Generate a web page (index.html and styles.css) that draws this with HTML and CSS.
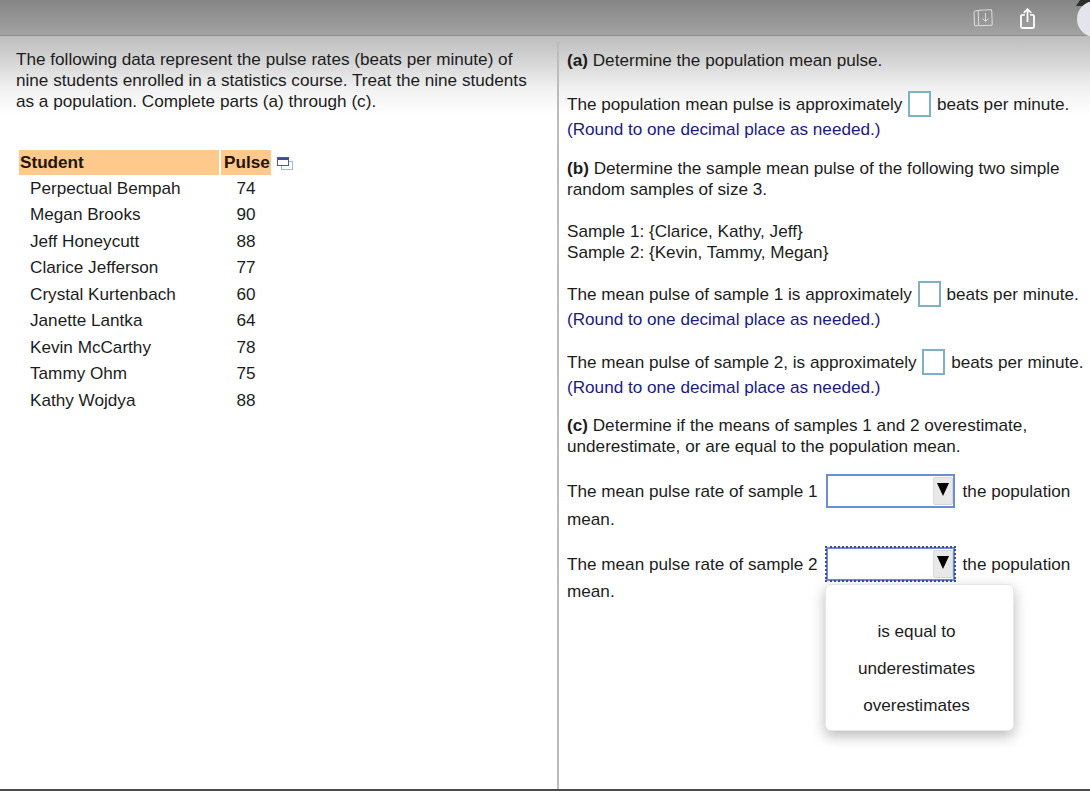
FILE: index.html
```html
<!DOCTYPE html>
<html lang="en">
<head>
<meta charset="utf-8">
<title>Pulse rates</title>
<link rel="stylesheet" href="styles.css">
</head>
<body>
<div class="page">
  <header class="topbar">
    <svg class="icon-save" width="20" height="18" viewBox="0 0 20 18" fill="none" stroke="#dedede" stroke-width="1">
      <path d="M5 1.5 L2 2 Q1 2.2 1 3 L1.5 16 Q1.6 17 2.5 17 L5.5 16.5"/>
      <rect x="5.5" y="1" width="13.5" height="15.5" rx="1" transform="rotate(-2 12 9)"/>
      <path d="M12.5 4 V12 M9.5 9.5 L12.5 12.5 L15.5 9.5"/>
    </svg>
    <svg class="icon-share" width="15" height="21" viewBox="0 0 15 21" fill="none" stroke="#fff" stroke-width="1.8">
      <path d="M7.5 14 V1.2 M3.8 4.8 L7.5 1.2 L11.2 4.8"/>
      <path d="M4.8 6.8 H2.2 Q1 6.8 1 8 V18.8 Q1 20 2.2 20 H12.8 Q14 20 14 18.8 V8 Q14 6.8 12.8 6.8 H10.2"/>
    </svg>
  </header>
  <div class="corner-speck"></div>
  <div class="corner-circle"></div>
  <main class="content">
    <section class="left">
      <p class="intro">The following data represent the pulse rates (beats per minute) of nine students enrolled in a statistics course. Treat the nine students as a population. Complete parts (a) through (c).</p>
      <div class="table-wrap">
        <table class="data">
          <thead>
            <tr><th class="name-h">Student</th><th class="pulse-h">Pulse</th></tr>
          </thead>
          <tbody>
            <tr><td class="name">Perpectual Bempah</td><td class="pulse">74</td></tr>
            <tr><td class="name">Megan Brooks</td><td class="pulse">90</td></tr>
            <tr><td class="name">Jeff Honeycutt</td><td class="pulse">88</td></tr>
            <tr><td class="name">Clarice Jefferson</td><td class="pulse">77</td></tr>
            <tr><td class="name">Crystal Kurtenbach</td><td class="pulse">60</td></tr>
            <tr><td class="name">Janette Lantka</td><td class="pulse">64</td></tr>
            <tr><td class="name">Kevin McCarthy</td><td class="pulse">78</td></tr>
            <tr><td class="name">Tammy Ohm</td><td class="pulse">75</td></tr>
            <tr><td class="name">Kathy Wojdya</td><td class="pulse">88</td></tr>
          </tbody>
        </table>
        <svg class="icon-popout" width="16" height="13" viewBox="0 0 16 13" fill="none">
          <rect x="4.5" y="4.5" width="11" height="8" fill="#fff" stroke="#a9b4d6"/>
          <rect x="0.5" y="0.5" width="11" height="8" fill="#fff" stroke="#4a5aa0"/>
          <rect x="1" y="1" width="10" height="2" fill="#3c4c96"/>
        </svg>
      </div>
    </section>
    <section class="right">
      <p class="a-head"><b>(a)</b> Determine the population mean pulse.</p>
      <p class="line a-line">The population mean pulse is approximately <span class="box"></span> beats per minute.</p>
      <p class="hint">(Round to one decimal place as needed.)</p>
      <p class="b-head"><b>(b)</b> Determine the sample mean pulse of the following two simple random samples of size 3.</p>
      <p class="samples">Sample 1: {Clarice, Kathy, Jeff}<br>Sample 2: {Kevin, Tammy, Megan}</p>
      <p class="line s1-line">The mean pulse of sample 1 is approximately <span class="box"></span> beats per minute.</p>
      <p class="hint">(Round to one decimal place as needed.)</p>
      <p class="line s2-line">The mean pulse of sample 2, is approximately <span class="box"></span> beats per minute.</p>
      <p class="hint">(Round to one decimal place as needed.)</p>
      <p class="c-head"><b>(c)</b> Determine if the means of samples 1 and 2 overestimate, underestimate, or are equal to the population mean.</p>
      <div class="drop-row first">
        <span>The mean pulse rate of sample 1</span>
        <span class="drop"><span class="arrow"><i class="tri"></i></span></span>
        <span>the population</span>
      </div>
      <p class="tail">mean.</p>
      <div class="drop-row second">
        <span>The mean pulse rate of sample 2</span>
        <span class="drop focused"><span class="arrow"><i class="tri"></i></span></span>
        <span>the population</span>
      </div>
      <p class="tail last">mean.</p>
      <ul class="menu">
        <li>is equal to</li>
        <li>underestimates</li>
        <li>overestimates</li>
      </ul>
    </section>
  </main>
  <div class="bottom-line"></div>
</div>
</body>
</html>
```
FILE: styles.css
```css
* { box-sizing: border-box; }
html, body { margin: 0; padding: 0; }
body {
  width: 1090px;
  height: 791px;
  overflow: hidden;
  background: #fff;
  font-family: "Liberation Sans", Arial, sans-serif;
  font-size: 17.15px;
  line-height: 21px;
  color: #1c1c1c;
}
p { margin: 0; }
.page {
  position: relative;
  height: 791px;
  display: flex;
  flex-direction: column;
  overflow: hidden;
  background: linear-gradient(to bottom, #bdbdbd 36px, #d4d4d4 60px, #f2f2f2 90px, #fff 115px);
}
.topbar {
  height: 36px;
  flex: none;
  display: flex;
  align-items: center;
  justify-content: flex-end;
  gap: 27px;
  padding-right: 55px;
  background: linear-gradient(to bottom, #858585, #a3a3a3);
  border-bottom: 1px solid #8e8e8e;
}
.icon-save { margin-top: 1px; }
.icon-share { margin-top: 2px; }
.corner-speck {
  position: absolute;
  left: 1078px;
  top: 0;
  width: 14px;
  height: 6px;
  background: #2e2e2e;
  transform: skewX(-35deg);
}
.corner-circle {
  position: absolute;
  left: 1077px;
  top: 1px;
  width: 36px;
  height: 36px;
  border-radius: 50%;
  background: #e3e4ec;
}
.content { flex: 1; display: flex; min-height: 0; }
.left { width: 557px; flex: none; padding: 13px 16px 0; }
.intro { width: 520px; }
.table-wrap { display: flex; align-items: flex-start; margin: 38px 0 0 3px; }
.data { border-collapse: separate; border-spacing: 0; }
.data th { background: #fdc98c; height: 25px; padding: 0; font-weight: bold; text-align: left; color: #24140a; }
.name-h { width: 200px; padding-left: 1px !important; }
.data th + th { border-left: 2px solid #fff; width: 52px; padding-left: 3px; }
.data td { height: 26.5px; padding: 0; }
.name { padding-left: 11px !important; }
.pulse { text-align: center; padding-left: 2px !important; }
.icon-popout { margin: 7px 0 0 6px; }
.right {
  position: relative;
  flex: 1;
  margin-top: 5px;
  border-left: 2px solid #bcbcbc;
  padding: 9px 0 0 8px;
}
.line { white-space: nowrap; }
.box {
  display: inline-block;
  width: 23px;
  height: 26px;
  border: 2px solid #7fb1c4;
  background: #fff;
  vertical-align: -7px;
  margin: 0 1px;
}
.a-head { margin-bottom: 20px; }
.a-line { margin-bottom: 4px; height: 24px; }
.hint { color: #1a1a80; }
.b-head { margin-top: 18px; width: 510px; }
.samples { margin-top: 21px; }
.s1-line { margin-top: 18px; height: 24px; margin-bottom: 4px; }
.s2-line { margin-top: 19px; height: 24px; margin-bottom: 4px; }
.c-head { margin-top: 17px; width: 510px; }
.drop-row { display: flex; align-items: center; gap: 8px; height: 34px; white-space: nowrap; }
.drop-row.first { margin-top: 17px; }
.drop-row.second { margin-top: 17px; }
.drop {
  position: relative;
  width: 129px;
  height: 34px;
  border: 2px solid #6d8cd6;
  background: #fff;
}
.drop.focused { outline: 2px dotted #3c4c96; outline-offset: -1px; }
.arrow {
  position: absolute;
  right: 0;
  top: 1px;
  width: 20px;
  height: 28px;
  background: #e8e8e8;
  border-radius: 2px;
  border: 1px solid #d8d8d8;
  display: flex;
  justify-content: center;
  padding-top: 5px;
}
.tri {
  width: 0;
  height: 0;
  border-left: 6px solid transparent;
  border-right: 6px solid transparent;
  border-top: 13px solid #000;
}
.tail { line-height: 22px; }
.tail.last { margin-top: -1px; }
.menu {
  position: absolute;
  left: 266px;
  top: 543px;
  width: 189px;
  height: 147px;
  margin: 0;
  padding: 36px 6px 0 0;
  list-style: none;
  background: #fff;
  border: 1px solid #e8e8e8;
  border-radius: 6px;
  box-shadow: 0 5px 14px rgba(0,0,0,.28);
  text-align: center;
}
.menu li { height: 37px; }
.bottom-line { height: 2px; flex: none; background: #4a4a4a; }
```
